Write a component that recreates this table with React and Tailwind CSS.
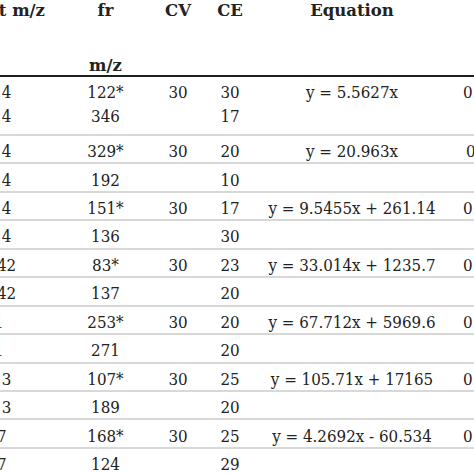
import React from "react";

const rows = [
  ["514.14", "122*", "30", "30", "y = 5.5627x", "0.9991", 0],
  ["514.14", "346", "", "17", "", "", 0],
  ["514.14", "329*", "30", "20", "y = 20.963x", "0.999", 3],
  ["514.14", "192", "", "10", "", "", 0],
  ["514.14", "151*", "30", "17", "y = 9.5455x + 261.14", "0.9993", 0],
  ["514.14", "136", "", "30", "", "", 0],
  ["1255.42", "83*", "30", "23", "y = 33.014x + 1235.7", "0.9987", 0],
  ["1255.42", "137", "", "20", "", "", 0],
  ["330.1", "253*", "30", "20", "y = 67.712x + 5969.6", "0.9990", 4],
  ["330.1", "271", "", "20", "", "", 4],
  ["514.13", "107*", "30", "25", "y = 105.71x + 17165", "0.9989", 0],
  ["514.13", "189", "", "20", "", "", 0],
  ["116.7", "168*", "30", "25", "y = 4.2692x - 60.534", "0.9994", 0],
  ["116.7", "124", "", "29", "", "", 0],
];

function Cells({ r }) {
  return (
    <>
      <div className={"w-[130px] shrink-0 text-center " + (r[6] === 4 ? "pr-[6px]" : "")}>{r[0]}</div>
      <div className="w-[111px] shrink-0 text-center">{r[1]}</div>
      <div className="w-[34px] shrink-0 text-center">{r[2]}</div>
      <div className="w-[70px] shrink-0 text-center">{r[3]}</div>
      <div className="w-[174px] shrink-0 text-center">{r[4]}</div>
      <div className="w-[120px] shrink-0 pl-[24px]">
        <span className={r[6] === 3 ? "pl-[3px]" : ""}>{r[5]}</span>
      </div>
    </>
  );
}

export default function App() {
  return (
    <div className="w-[474px] h-[474px] overflow-hidden bg-white">
      <div
        className="ml-[-80px] w-[640px] text-[16.8px] text-[#222]"
        style={{ fontFamily: '"DejaVu Serif", serif' }}
      >
        <div className="flex h-[75px] font-bold text-[16.5px] leading-[20px] whitespace-nowrap">
          <div className="w-[130px] shrink-0 text-right pr-[5px] pt-[1px]">Parent m/z</div>
          <div className="w-[111px] shrink-0 flex flex-col justify-between items-center pt-[1px]">
            <span>fr</span>
            <span className="leading-[18px]">m/z</span>
          </div>
          <div className="w-[34px] shrink-0 flex justify-center pt-[1px]">CV</div>
          <div className="w-[70px] shrink-0 text-center pt-[1px]">CE</div>
          <div className="w-[174px] shrink-0 text-center pt-[1px]">Equation</div>
          <div className="w-[120px] shrink-0 pl-[24px] pt-[1px]"></div>
        </div>
        <div className="border-t-2 border-[#1e1e1e] [font-stretch:87.5%]" style={{ fontFamily: '"DejaVu Serif Condensed", "DejaVu Serif", serif' }}>
          <div className="flex h-[28px] items-center pt-[4px] whitespace-nowrap">
            <Cells r={rows[0]} />
          </div>
          <div className="flex h-[29px] items-center pb-[5px] whitespace-nowrap">
            <Cells r={rows[1]} />
          </div>
          {rows.slice(2).map((r, i) => (
            <div
              key={i}
              className="flex h-[28.45px] items-center pt-[5px] border-t-2 border-[#d8d8d8] whitespace-nowrap"
            >
              <Cells r={r} />
            </div>
          ))}
        </div>
      </div>
    </div>
  );
}
